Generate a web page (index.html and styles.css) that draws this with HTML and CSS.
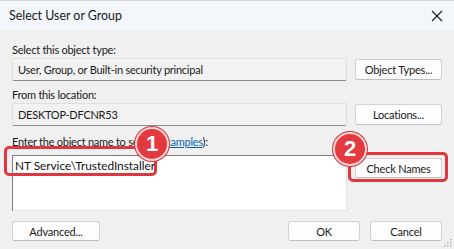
FILE: index.html
```html
<!DOCTYPE html>
<html>
<head>
<meta charset="utf-8">
<link rel="stylesheet" href="styles.css">
</head>
<body>
<div class="window">
  <div class="titlebar">
    <span class="title">Select User or Group</span>
    <span class="close">
      <svg width="12" height="12" viewBox="0 0 12 12"><path d="M1 1L11 11M11 1L1 11" stroke="#1a1a1a" stroke-width="1.1" fill="none"/></svg>
    </span>
  </div>
  <div class="content">
    <div class="label l1">Select this object type:</div>
    <div class="row">
      <div class="field">User, Group, or Built-in security principal</div>
      <button class="btn side">Object Types...</button>
    </div>
    <div class="label l2">From this location:</div>
    <div class="row">
      <div class="field">DESKTOP-DFCNR53</div>
      <button class="btn side">Locations...</button>
    </div>
    <div class="label l3"><u>E</u>nter the object name to select (<a class="link">examples</a>):</div>
    <div class="row top">
      <div class="textarea"><span class="typed">NT Service\TrustedInstaller</span><span class="caret"></span></div>
      <button class="btn side check">Check Names</button>
    </div>
    <div class="bottom">
      <button class="btn adv">Advanced...</button>
      <div class="spacer"></div>
      <button class="btn ok">OK</button>
      <button class="btn ok">Cancel</button>
    </div>
  </div>
  <div class="hl hl1"></div>
  <div class="hl hl2"></div>
  <div class="badge b1">1</div>
  <div class="badge b2">2</div>
  <svg class="grip" width="8" height="8" viewBox="0 0 8 8"><g fill="#b5b5b5"><rect x="6" y="0" width="1.5" height="1.5"/><rect x="3" y="3" width="1.5" height="1.5"/><rect x="6" y="3" width="1.5" height="1.5"/><rect x="0" y="6" width="1.5" height="1.5"/><rect x="3" y="6" width="1.5" height="1.5"/><rect x="6" y="6" width="1.5" height="1.5"/></g></svg>
</div>
</body>
</html>
```

FILE: styles.css
```css
html, body {
  margin: 0;
  padding: 0;
}
body {
  width: 454px;
  height: 249px;
  overflow: hidden;
  background: #f0f0f0;
  font-family: Lato, "Noto Sans", sans-serif;
  font-size: 11px;
  letter-spacing: -0.25px;
  color: #1a1a1a;
}
.window {
  position: relative;
  width: 454px;
  height: 249px;
  background: #f0f0f0;
}
.titlebar {
  height: 30px;
  background: #f3f6fa;
  display: flex;
  align-items: center;
  justify-content: space-between;
  padding: 0 9px 0 9px;
  box-sizing: border-box;
  border-top: 1px solid #d4d6da;
  letter-spacing: 0;
}
.title {
  font-size: 12.4px;
  color: #1a1a1a;
}
.close {
  display: flex;
  width: 12px;
  height: 12px;
  margin-right: 2px;
}
.content {
  padding: 0 12px;
}
.label {
  height: 14px;
  line-height: 14px;
  white-space: nowrap;
}
.l1 { margin-top: 13px; }
.l2 { margin-top: 7px; }
.l3 { margin-top: 9px; }
.link {
  color: #0b63b6;
  text-decoration: underline;
}
.row {
  display: flex;
  align-items: center;
  gap: 8px;
  margin-top: 1px;
}
.row.top {
  align-items: flex-start;
  margin-top: 6px;
}
.field {
  flex: 1;
  height: 23px;
  box-sizing: border-box;
  background: #f2f2f2;
  border: 1px solid #dedede;
  border-bottom: 1px solid #8a8a8a;
  border-radius: 2px;
  padding: 0 5px;
  line-height: 21px;
  white-space: nowrap;
}
.btn {
  font-family: inherit;
  font-size: 11px;
  letter-spacing: -0.2px;
  color: #1a1a1a;
  background: #fdfdfd;
  border: 1px solid #d2d2d2;
  border-bottom-color: #bdbdbd;
  border-radius: 3px;
  height: 21px;
  padding: 0;
  margin: 0;
  box-sizing: border-box;
  line-height: 19px;
}
.side {
  width: 87px;
  flex: none;
}
.check {
  margin-top: 3px;
  height: 20px;
}
.textarea {
  flex: 1;
  height: 56px;
  box-sizing: border-box;
  background: #ffffff;
  border: 1px solid #e3e3e3;
  border-top-color: #7d7d7d;
  border-left-color: #7d7d7d;
  padding: 2px 2px;
  line-height: 15px;
  white-space: nowrap;
}
.typed {
  font-size: 11.8px;
  letter-spacing: 0;
  color: #111;
}
.caret {
  display: inline-block;
  width: 1px;
  height: 13px;
  background: #000;
  vertical-align: -2px;
}
.bottom {
  display: flex;
  gap: 10px;
  margin-top: 10px;
}
.spacer { flex: 1; }
.adv { width: 88px; height: 20px; }
.ok { width: 72px; height: 20px; }
.hl {
  position: absolute;
  border: 3.5px solid #e2363e;
  border-radius: 5px;
  box-sizing: border-box;
}
.hl1 {
  left: 4px;
  top: 146px;
  width: 153px;
  height: 30px;
}
.hl2 {
  left: 348px;
  top: 152px;
  width: 100px;
  height: 30px;
}
.badge {
  position: absolute;
  width: 34px;
  height: 34px;
  box-sizing: border-box;
  border-radius: 50%;
  background: #e23a3f;
  border: 2px solid #f7d6d7;
  box-shadow: 0 0 0 1px #d4333a;
  color: #ffffff;
  font-family: "Liberation Sans", "Noto Sans", sans-serif;
  font-weight: bold;
  font-size: 22px;
  letter-spacing: 0;
  line-height: 30px;
  text-align: center;
}
.b1 { left: 135px; top: 127px; }
.b2 { left: 333px; top: 132px; }
.grip {
  position: absolute;
  right: 2px;
  bottom: 2px;
}
```
